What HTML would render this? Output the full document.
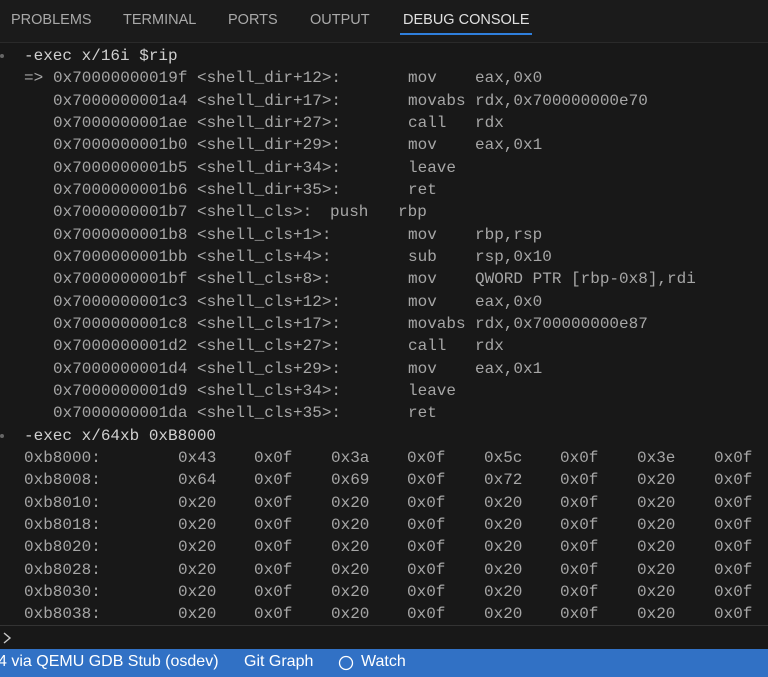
<!DOCTYPE html>
<html><head><meta charset="utf-8"><style>
*{margin:0;padding:0;box-sizing:border-box}
body{width:768px;height:677px;background:#181818;overflow:hidden;position:relative;font-family:"Liberation Mono",monospace;font-size:16px}
.tabs{position:absolute;left:0;top:0;width:768px;height:43px;background:#1b1b1b;border-bottom:1px solid #2a2a2a;font-family:"Liberation Sans",sans-serif;font-size:14.5px;color:#a9a9a9}
.tabs span{position:absolute;top:12px}
.ul{position:absolute;left:400px;top:33px;width:132px;height:2px;background:#2f7fdc}
.r{position:absolute;left:0;height:22px;line-height:22px;white-space:pre;color:#a6a6a6}
.r b{font-weight:normal;position:absolute}
.c{color:#d0d0d0}
.bul{position:absolute;left:0;width:4px;height:4px;background:#666;border-radius:2px;margin-top:9px}
.inp{position:absolute;left:0;top:625px;width:768px;height:24px;border-top:1px solid #333;background:#181818}
.sb{position:absolute;left:0;top:649px;width:768px;height:28px;background:#3171c5;color:#fff;font-family:"Liberation Sans",sans-serif;font-size:16px}
.sb span{position:absolute;top:4px}
</style></head><body>
<div class="tabs">
<span style="left:11px">PROBLEMS</span>
<span style="left:123px">TERMINAL</span>
<span style="left:228px">PORTS</span>
<span style="left:310px">OUTPUT</span>
<span style="left:403px;color:#e0e0e0">DEBUG CONSOLE</span>
<div class="ul"></div>
</div>

<div class="r c" style="top:45px"><i class="bul"></i><b style="left:24px">-exec x/16i $rip</b></div>
<div class="r" style="top:67px"><b style="left:24px">=&gt;</b><b style="left:53px">0x70000000019f</b><b style="left:197px">&lt;shell_dir+12&gt;:</b><b style="left:408px">mov</b><b style="left:475px">eax,0x0</b></div>
<div class="r" style="top:89.5px"><b style="left:53px">0x7000000001a4</b><b style="left:197px">&lt;shell_dir+17&gt;:</b><b style="left:408px">movabs</b><b style="left:475px">rdx,0x700000000e70</b></div>
<div class="r" style="top:112px"><b style="left:53px">0x7000000001ae</b><b style="left:197px">&lt;shell_dir+27&gt;:</b><b style="left:408px">call</b><b style="left:475px">rdx</b></div>
<div class="r" style="top:134px"><b style="left:53px">0x7000000001b0</b><b style="left:197px">&lt;shell_dir+29&gt;:</b><b style="left:408px">mov</b><b style="left:475px">eax,0x1</b></div>
<div class="r" style="top:156.5px"><b style="left:53px">0x7000000001b5</b><b style="left:197px">&lt;shell_dir+34&gt;:</b><b style="left:408px">leave</b></div>
<div class="r" style="top:179px"><b style="left:53px">0x7000000001b6</b><b style="left:197px">&lt;shell_dir+35&gt;:</b><b style="left:408px">ret</b></div>
<div class="r" style="top:201px"><b style="left:53px">0x7000000001b7</b><b style="left:197px">&lt;shell_cls&gt;:</b><b style="left:330px">push</b><b style="left:398px">rbp</b></div>
<div class="r" style="top:223.5px"><b style="left:53px">0x7000000001b8</b><b style="left:197px">&lt;shell_cls+1&gt;:</b><b style="left:408px">mov</b><b style="left:475px">rbp,rsp</b></div>
<div class="r" style="top:246px"><b style="left:53px">0x7000000001bb</b><b style="left:197px">&lt;shell_cls+4&gt;:</b><b style="left:408px">sub</b><b style="left:475px">rsp,0x10</b></div>
<div class="r" style="top:268px"><b style="left:53px">0x7000000001bf</b><b style="left:197px">&lt;shell_cls+8&gt;:</b><b style="left:408px">mov</b><b style="left:475px">QWORD PTR [rbp-0x8],rdi</b></div>
<div class="r" style="top:290.5px"><b style="left:53px">0x7000000001c3</b><b style="left:197px">&lt;shell_cls+12&gt;:</b><b style="left:408px">mov</b><b style="left:475px">eax,0x0</b></div>
<div class="r" style="top:313px"><b style="left:53px">0x7000000001c8</b><b style="left:197px">&lt;shell_cls+17&gt;:</b><b style="left:408px">movabs</b><b style="left:475px">rdx,0x700000000e87</b></div>
<div class="r" style="top:335px"><b style="left:53px">0x7000000001d2</b><b style="left:197px">&lt;shell_cls+27&gt;:</b><b style="left:408px">call</b><b style="left:475px">rdx</b></div>
<div class="r" style="top:357.5px"><b style="left:53px">0x7000000001d4</b><b style="left:197px">&lt;shell_cls+29&gt;:</b><b style="left:408px">mov</b><b style="left:475px">eax,0x1</b></div>
<div class="r" style="top:380px"><b style="left:53px">0x7000000001d9</b><b style="left:197px">&lt;shell_cls+34&gt;:</b><b style="left:408px">leave</b></div>
<div class="r" style="top:402px"><b style="left:53px">0x7000000001da</b><b style="left:197px">&lt;shell_cls+35&gt;:</b><b style="left:408px">ret</b></div>
<div class="r c" style="top:424.5px"><i class="bul"></i><b style="left:24px">-exec x/64xb 0xB8000</b></div>
<div class="r" style="top:447px"><b style="left:24px">0xb8000:</b><b style="left:178px">0x43</b><b style="left:254px">0x0f</b><b style="left:331px">0x3a</b><b style="left:407px">0x0f</b><b style="left:484px">0x5c</b><b style="left:560px">0x0f</b><b style="left:637px">0x3e</b><b style="left:714px">0x0f</b></div>
<div class="r" style="top:469px"><b style="left:24px">0xb8008:</b><b style="left:178px">0x64</b><b style="left:254px">0x0f</b><b style="left:331px">0x69</b><b style="left:407px">0x0f</b><b style="left:484px">0x72</b><b style="left:560px">0x0f</b><b style="left:637px">0x20</b><b style="left:714px">0x0f</b></div>
<div class="r" style="top:491.5px"><b style="left:24px">0xb8010:</b><b style="left:178px">0x20</b><b style="left:254px">0x0f</b><b style="left:331px">0x20</b><b style="left:407px">0x0f</b><b style="left:484px">0x20</b><b style="left:560px">0x0f</b><b style="left:637px">0x20</b><b style="left:714px">0x0f</b></div>
<div class="r" style="top:514px"><b style="left:24px">0xb8018:</b><b style="left:178px">0x20</b><b style="left:254px">0x0f</b><b style="left:331px">0x20</b><b style="left:407px">0x0f</b><b style="left:484px">0x20</b><b style="left:560px">0x0f</b><b style="left:637px">0x20</b><b style="left:714px">0x0f</b></div>
<div class="r" style="top:536px"><b style="left:24px">0xb8020:</b><b style="left:178px">0x20</b><b style="left:254px">0x0f</b><b style="left:331px">0x20</b><b style="left:407px">0x0f</b><b style="left:484px">0x20</b><b style="left:560px">0x0f</b><b style="left:637px">0x20</b><b style="left:714px">0x0f</b></div>
<div class="r" style="top:558.5px"><b style="left:24px">0xb8028:</b><b style="left:178px">0x20</b><b style="left:254px">0x0f</b><b style="left:331px">0x20</b><b style="left:407px">0x0f</b><b style="left:484px">0x20</b><b style="left:560px">0x0f</b><b style="left:637px">0x20</b><b style="left:714px">0x0f</b></div>
<div class="r" style="top:581px"><b style="left:24px">0xb8030:</b><b style="left:178px">0x20</b><b style="left:254px">0x0f</b><b style="left:331px">0x20</b><b style="left:407px">0x0f</b><b style="left:484px">0x20</b><b style="left:560px">0x0f</b><b style="left:637px">0x20</b><b style="left:714px">0x0f</b></div>
<div class="r" style="top:603px"><b style="left:24px">0xb8038:</b><b style="left:178px">0x20</b><b style="left:254px">0x0f</b><b style="left:331px">0x20</b><b style="left:407px">0x0f</b><b style="left:484px">0x20</b><b style="left:560px">0x0f</b><b style="left:637px">0x20</b><b style="left:714px">0x0f</b></div>

<div class="inp"><svg style="position:absolute;left:2px;top:6px" width="10" height="12" viewBox="0 0 10 12"><path d="M2 1 L8 6 L2 11" fill="none" stroke="#c8c8c8" stroke-width="1.4"/></svg></div>
<div class="sb">
<span style="left:-2px">4 via QEMU GDB Stub (osdev)</span>
<span style="left:244px">Git Graph</span>
<svg style="position:absolute;left:338px;top:6px" width="16" height="16"><circle cx="8" cy="8" r="6.5" fill="none" stroke="#fff" stroke-width="1.3"/></svg>
<span style="left:361px">Watch</span>
</div>
</body></html>
